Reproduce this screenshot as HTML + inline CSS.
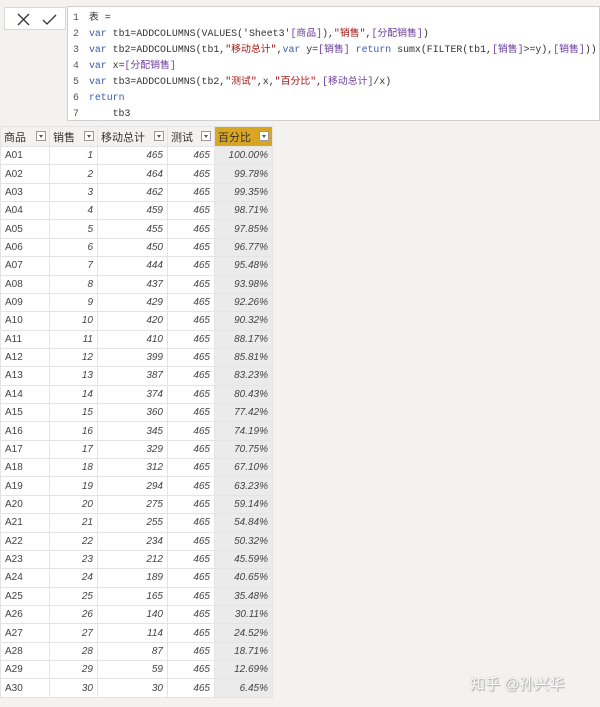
<!DOCTYPE html>
<html><head><meta charset="utf-8"><style>
body{margin:0;width:600px;height:707px;background:#f3f2f1;position:relative;overflow:hidden;font-family:"Liberation Sans","Noto Sans CJK SC",sans-serif;}
.btns{position:absolute;left:4px;top:7px;width:62px;height:23px;background:#fff;border:1px solid #d8d8d8;box-sizing:border-box}
.code{position:absolute;left:67px;top:6px;width:533px;height:115px;background:#fff;border:1px solid #d0d0d0;box-sizing:border-box;font-family:"Liberation Mono","Noto Sans CJK SC",monospace;font-size:9.9px;color:#333;overflow:hidden}
.ln{position:absolute;left:0;width:600px;height:16px;line-height:16px;white-space:pre}
.ln b{font-weight:normal;color:#555;display:inline-block;width:10px;margin-left:5px}
.k{color:#3b5bab}.s{color:#a31515}.c{color:#6a3d9a}.f{color:#333}
table{position:absolute;left:0;top:126px;border-collapse:collapse;table-layout:fixed;width:272px;font-size:10px;color:#444;background:#fff}
tr{height:18.37px}
td{padding:0 4px;border:1px solid #e4e4e4;font-style:italic;text-align:right;overflow:hidden;white-space:nowrap}
td:first-child{font-style:normal;text-align:left}
td:last-child{background:#ebebeb}
tr.h{height:20px}
th{font-weight:normal;text-align:left;padding:0 3px;border:1px solid #e4e4e4;background:#f3f2f1;color:#333;font-size:11px;position:relative;white-space:nowrap;overflow:hidden}
th.g{background:#d9a624}
th i{position:absolute;right:3px;top:4px;width:10px;height:10px;border:1px solid #999;background:#fff;box-sizing:border-box}
th i:after{content:"";position:absolute;left:2px;top:3px;border:2px solid transparent;border-top:3px solid #555}
.wm{position:absolute;left:470px;top:673px;font-size:15px;color:#fff;text-shadow:0 0 1px #999,1px 1px 1px #aaa}
</style></head><body>
<div class="btns"><svg width="62" height="23"><path d="M13 6l11 11M24 6L13 17" stroke="#333" stroke-width="1.3" fill="none"/><path d="M38 12l4 4 9-9" stroke="#333" stroke-width="1.3" fill="none"/></svg></div>
<div class="code">
<div class="ln" style="top:3px"><b>1</b> 表 =</div>
<div class="ln" style="top:19px"><b>2</b> <span class="k">var</span> tb1=ADDCOLUMNS(VALUES(<span class="f">'Sheet3'</span><span class="c">[商品]</span>),<span class="s">"销售"</span>,<span class="c">[分配销售]</span>)</div>
<div class="ln" style="top:35px"><b>3</b> <span class="k">var</span> tb2=ADDCOLUMNS(tb1,<span class="s">"移动总计"</span>,<span class="k">var</span> y=<span class="c">[销售]</span> <span class="k">return</span> sumx(FILTER(tb1,<span class="c">[销售]</span>&gt;=y),<span class="c">[销售]</span>))</div>
<div class="ln" style="top:51px"><b>4</b> <span class="k">var</span> x=<span class="c">[分配销售]</span></div>
<div class="ln" style="top:67px"><b>5</b> <span class="k">var</span> tb3=ADDCOLUMNS(tb2,<span class="s">"测试"</span>,x,<span class="s">"百分比"</span>,<span class="c">[移动总计]</span>/x)</div>
<div class="ln" style="top:83px"><b>6</b> <span class="k">return</span></div>
<div class="ln" style="top:99px"><b>7</b>     tb3</div>
</div>
<table>
<colgroup><col style="width:49px"><col style="width:48px"><col style="width:70px"><col style="width:47px"><col style="width:58px"></colgroup>
<tr class="h"><th>商品<i></i></th><th>销售<i></i></th><th>移动总计<i></i></th><th>测试<i></i></th><th class="g">百分比<i></i></th></tr>
<tr><td>A01</td><td>1</td><td>465</td><td>465</td><td>100.00%</td></tr>
<tr><td>A02</td><td>2</td><td>464</td><td>465</td><td>99.78%</td></tr>
<tr><td>A03</td><td>3</td><td>462</td><td>465</td><td>99.35%</td></tr>
<tr><td>A04</td><td>4</td><td>459</td><td>465</td><td>98.71%</td></tr>
<tr><td>A05</td><td>5</td><td>455</td><td>465</td><td>97.85%</td></tr>
<tr><td>A06</td><td>6</td><td>450</td><td>465</td><td>96.77%</td></tr>
<tr><td>A07</td><td>7</td><td>444</td><td>465</td><td>95.48%</td></tr>
<tr><td>A08</td><td>8</td><td>437</td><td>465</td><td>93.98%</td></tr>
<tr><td>A09</td><td>9</td><td>429</td><td>465</td><td>92.26%</td></tr>
<tr><td>A10</td><td>10</td><td>420</td><td>465</td><td>90.32%</td></tr>
<tr><td>A11</td><td>11</td><td>410</td><td>465</td><td>88.17%</td></tr>
<tr><td>A12</td><td>12</td><td>399</td><td>465</td><td>85.81%</td></tr>
<tr><td>A13</td><td>13</td><td>387</td><td>465</td><td>83.23%</td></tr>
<tr><td>A14</td><td>14</td><td>374</td><td>465</td><td>80.43%</td></tr>
<tr><td>A15</td><td>15</td><td>360</td><td>465</td><td>77.42%</td></tr>
<tr><td>A16</td><td>16</td><td>345</td><td>465</td><td>74.19%</td></tr>
<tr><td>A17</td><td>17</td><td>329</td><td>465</td><td>70.75%</td></tr>
<tr><td>A18</td><td>18</td><td>312</td><td>465</td><td>67.10%</td></tr>
<tr><td>A19</td><td>19</td><td>294</td><td>465</td><td>63.23%</td></tr>
<tr><td>A20</td><td>20</td><td>275</td><td>465</td><td>59.14%</td></tr>
<tr><td>A21</td><td>21</td><td>255</td><td>465</td><td>54.84%</td></tr>
<tr><td>A22</td><td>22</td><td>234</td><td>465</td><td>50.32%</td></tr>
<tr><td>A23</td><td>23</td><td>212</td><td>465</td><td>45.59%</td></tr>
<tr><td>A24</td><td>24</td><td>189</td><td>465</td><td>40.65%</td></tr>
<tr><td>A25</td><td>25</td><td>165</td><td>465</td><td>35.48%</td></tr>
<tr><td>A26</td><td>26</td><td>140</td><td>465</td><td>30.11%</td></tr>
<tr><td>A27</td><td>27</td><td>114</td><td>465</td><td>24.52%</td></tr>
<tr><td>A28</td><td>28</td><td>87</td><td>465</td><td>18.71%</td></tr>
<tr><td>A29</td><td>29</td><td>59</td><td>465</td><td>12.69%</td></tr>
<tr><td>A30</td><td>30</td><td>30</td><td>465</td><td>6.45%</td></tr>
</table>
<div class="wm">知乎 @孙兴华</div>
</body></html>
